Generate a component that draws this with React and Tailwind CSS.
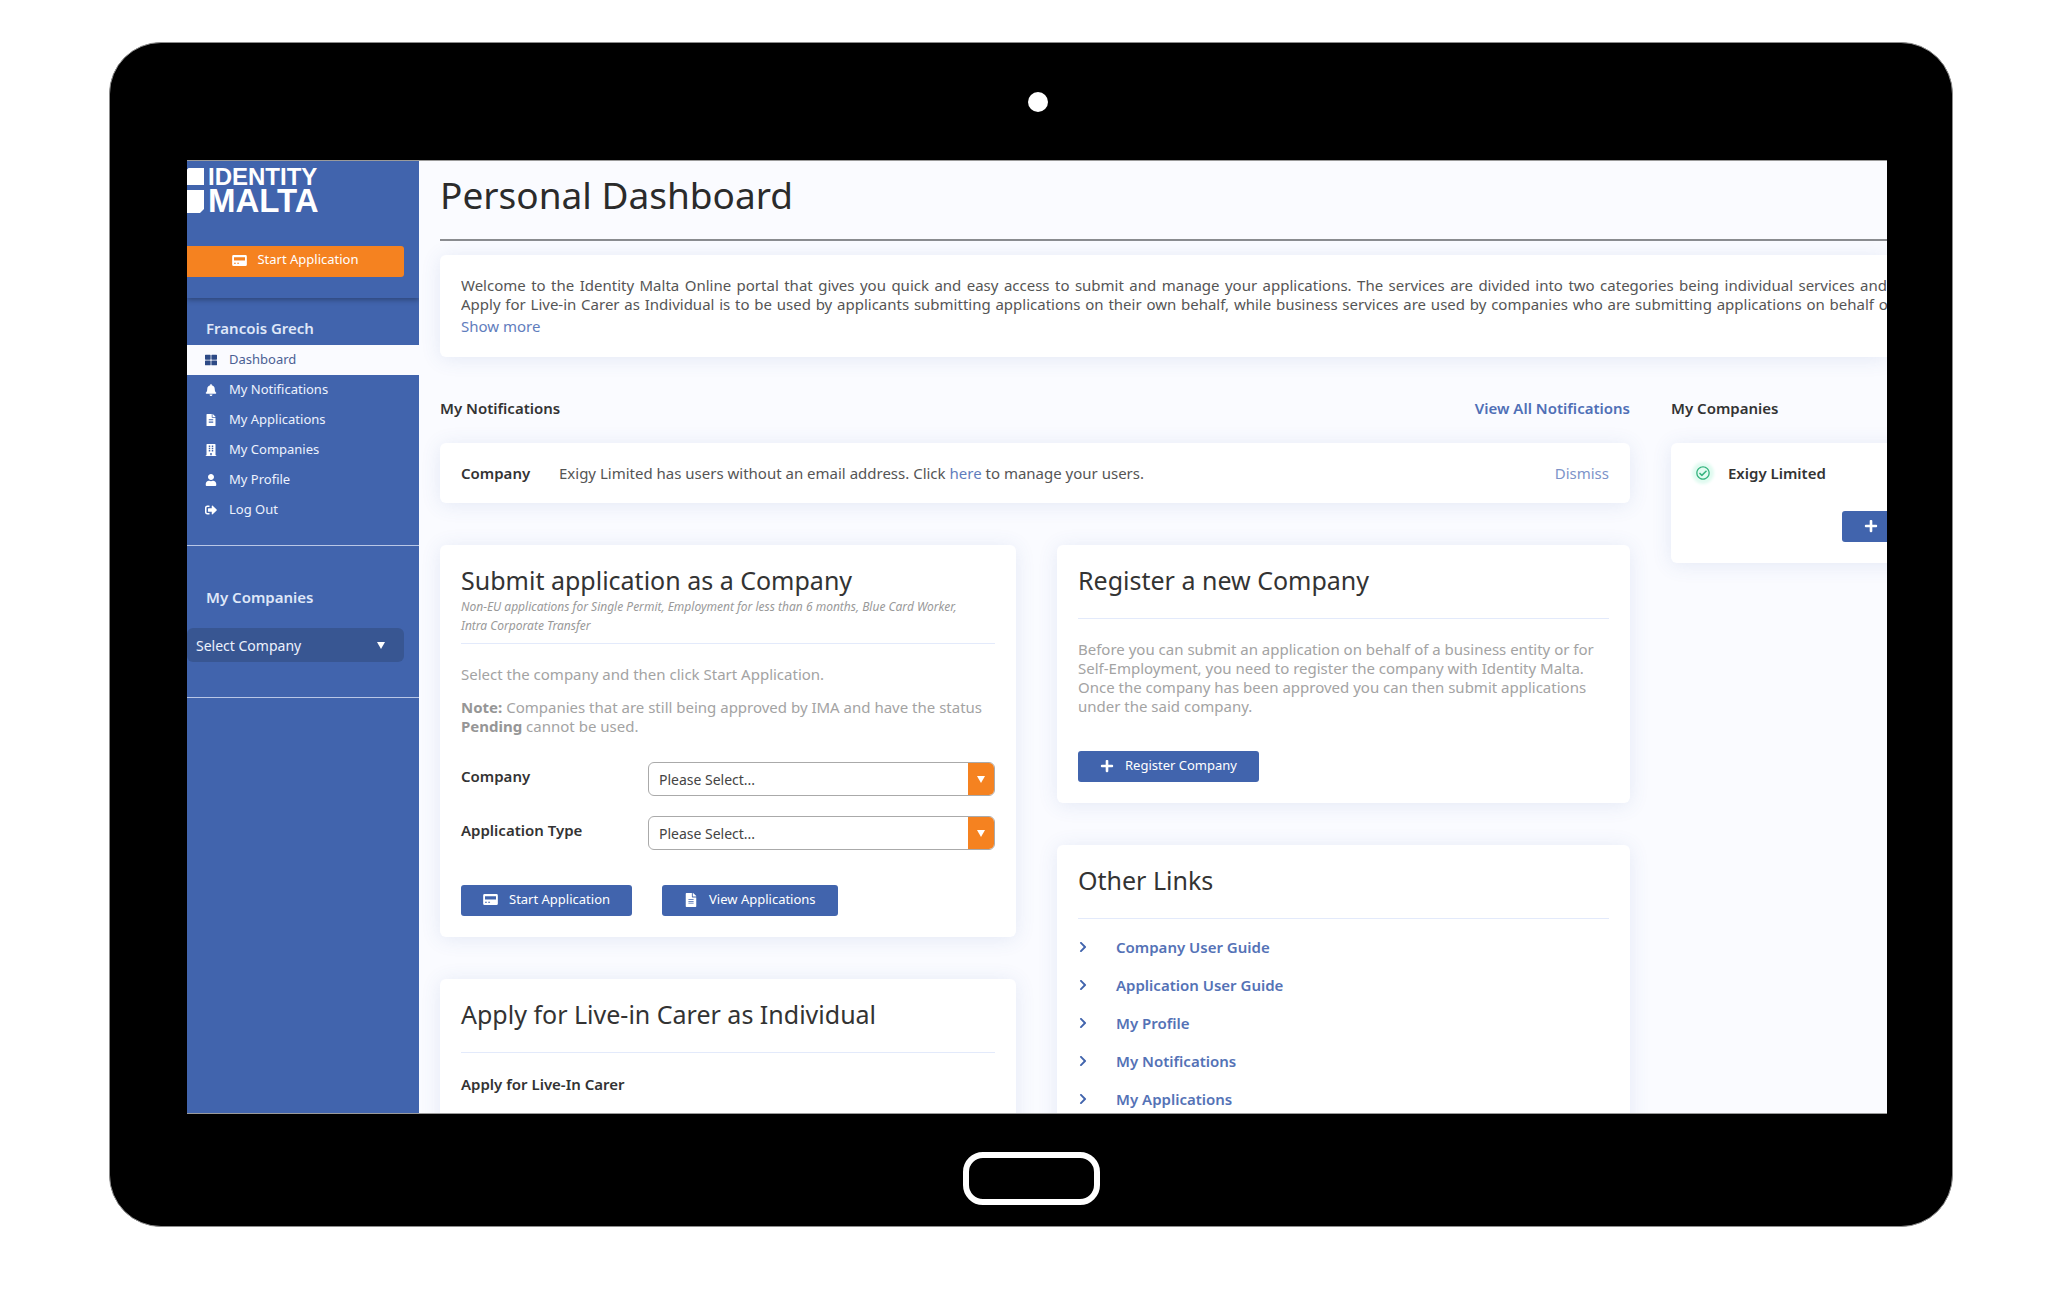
import {
  FaBell,
  FaBuilding,
  FaChevronRight,
  FaFileAlt,
  FaPlus,
  FaRegCheckCircle,
  FaSignOutAlt,
  FaThLarge,
  FaUser,
} from "react-icons/fa";

const menuItems = [
  { label: "Dashboard", icon: FaThLarge, active: true },
  { label: "My Notifications", icon: FaBell },
  { label: "My Applications", icon: FaFileAlt },
  { label: "My Companies", icon: FaBuilding },
  { label: "My Profile", icon: FaUser },
  { label: "Log Out", icon: FaSignOutAlt },
];

const otherLinks = [
  "Company User Guide",
  "Application User Guide",
  "My Profile",
  "My Notifications",
  "My Applications",
];

function CardIcon({ className }) {
  return (
    <svg viewBox="0 0 16 12" className={className} fill="currentColor" aria-hidden="true">
      <path
        fillRule="evenodd"
        d="M1.5 0h13A1.5 1.5 0 0 1 16 1.500v9a1.500 1.500 0 0 1-1.500 1.500h-13A1.500 1.500 0 0 1 0 10.500v-9A1.500 1.500 0 0 1 1.500 0zM2 2.500v3.500h12V2.500zM2 8.500v1h2v-1zM5.500 8.500v1h2v-1z"
      />
    </svg>
  );
}

function Triangle({ className }) {
  return (
    <svg viewBox="0 0 8 7" className={className} fill="currentColor" aria-hidden="true">
      <path d="M0 0h8L4 7z" />
    </svg>
  );
}

function Logo() {
  return (
    <a href="#home" className="flex gap-[4px] text-white">
      <svg viewBox="0 0 17 45" className="h-[45px] w-[17px] shrink-0" fill="currentColor" aria-hidden="true">
        <path d="M1.500 0H17v17H0V1.500zM0 22h17v19l-4 4H0z" />
      </svg>
      <span className="flex flex-col font-['Liberation_Sans',sans-serif] font-bold">
        <span className="text-[24px] leading-[17px]">IDENTITY</span>
        <span className="mt-[3px] text-[33px] leading-[25px]">MALTA</span>
      </span>
    </a>
  );
}

function Card({ className = "", children }) {
  return (
    <section className={`rounded-md bg-white px-[21px] shadow-[0_2px_20px_rgba(65,100,173,0.12)] ${className}`}>
      {children}
    </section>
  );
}

function CardTitle({ children }) {
  return (
    <h2 className="border-b border-[#e3eafb] pt-[19px] pb-[21px] text-[25px] leading-[33px] text-[#333]">
      {children}
    </h2>
  );
}

function Button({ icon: Icon, iconClass, children }) {
  return (
    <button
      type="button"
      className="flex h-[31px] items-center gap-[11px] rounded-[3px] bg-[#4164ad] px-[22px] pb-[2px] text-[13px] whitespace-nowrap text-white"
    >
      <Icon className={iconClass} />
      {children}
    </button>
  );
}

function SelectField({ id, label }) {
  return (
    <div className="flex items-center justify-between">
      <label htmlFor={id} className="pb-1.5 font-semibold text-[#333]">
        {label}
      </label>
      <div className="relative w-[65%]">
        <select
          id={id}
          className="h-[34px] w-full appearance-none rounded-md border border-[#aaa] bg-white pl-[10px] text-[14px] text-[#444]"
        >
          <option>Please Select...</option>
        </select>
        <span className="pointer-events-none absolute inset-y-px right-px flex w-[26px] items-center justify-center rounded-r-[5px] bg-[#f58220] text-white">
          <Triangle className="h-[7px] w-[8px]" />
        </span>
      </div>
    </div>
  );
}

function Sidebar() {
  return (
    <aside className="w-[232px] shrink-0 bg-[#4164ad] text-white">
      <div className="h-[137px] pt-[7px] shadow-[0_2px_5px_rgba(0,0,0,0.3)]">
        <Logo />
        <button
          type="button"
          className="mt-[33px] flex h-[31px] w-[217px] items-center justify-center gap-[10px] rounded-r-[3px] bg-[#f58220] pb-[3px] text-[13px]"
        >
          <CardIcon className="h-[11px] w-[15px]" />
          Start Application
        </button>
      </div>

      <h2 className="flex h-[47px] items-center pt-[13px] pl-[19px] font-semibold text-[#dfe7f8]">
        Francois Grech
      </h2>
      <nav>
        {menuItems.map(({ label, icon: Icon, active }) => (
          <a
            key={label}
            href="#menu"
            className={`flex h-[30px] items-center gap-3 pl-[18px] text-[13px] ${
              active ? "bg-[#fafbff] text-[#4b6093]" : "text-[#edf2fd]"
            }`}
          >
            <Icon className={`w-[12px] text-[12px] ${active ? "text-[#2d4a86]" : "text-white"}`} />
            {label}
          </a>
        ))}
      </nav>

      <div className="mt-5 h-[153px] border-y border-[#b9c7e6] pt-[40px]">
        <label htmlFor="side-company" className="block pl-[19px] leading-[22px] font-semibold text-[#dfe7f8]">
          My Companies
        </label>
        <div className="relative mt-5 w-[217px]">
          <select
            id="side-company"
            className="h-[34px] w-full appearance-none rounded-md bg-[#385692] pl-[9px] text-[14px] text-[#edf2fd]"
          >
            <option>Select Company</option>
          </select>
          <Triangle className="pointer-events-none absolute top-[14px] right-[19px] h-[7px] w-[8px]" />
        </div>
      </div>
    </aside>
  );
}

function Dashboard() {
  return (
    <main className="min-w-0 flex-1 overflow-hidden bg-[#fafbff] pl-[21px] text-[#555]">
      <h1 className="h-[80px] border-b-2 border-[#8a8c90] pt-[9px] text-[37px] leading-[49px] text-[#2b2b2b]">
        Personal Dashboard
      </h1>

      <Card className="mt-[14px] h-[102px] rounded-r-none pt-[21px] pr-0">
        <div className="overflow-hidden leading-[19px] whitespace-nowrap">
          <p className="text-justify [text-align-last:justify]">
            Welcome to the Identity Malta Online portal that gives you quick and easy access to submit and manage
            your applications. The services are divided into two categories being individual services and
          </p>
          <p className="w-[calc(100%+6px)] text-justify [text-align-last:justify]">
            Apply for Live-in Carer as Individual is to be used by applicants submitting applications on their own
            behalf, while business services are used by companies who are submitting applications on behalf of
          </p>
        </div>
        <a href="#more" className="mt-[3px] block leading-[19px] text-[#5f7dbd]">
          Show more
        </a>
      </Card>

      <div className="grid grid-cols-[minmax(0,1fr)_216px] gap-x-[41px]">
        <div>
          <div className="flex items-center justify-between pt-[40px] leading-[22px] font-semibold">
            <h3 className="text-[#333]">My Notifications</h3>
            <a href="#notifications" className="text-[#4f6fb6]">
              View All Notifications
            </a>
          </div>

          <Card className="mt-[24px] flex h-[60px] items-center">
            <span className="w-[98px] font-semibold text-[#333]">Company</span>
            <p className="flex-1">
              Exigy Limited has users without an email address. Click{" "}
              <a href="#users" className="text-[#5f7dbd]">
                here
              </a>{" "}
              to manage your users.
            </p>
            <button type="button" className="text-[#7c93c9]">
              Dismiss
            </button>
          </Card>

          <div className="mt-[42px] grid grid-cols-[576fr_573fr] items-start gap-x-[41px]">
            <div>
              <Card className="pb-[21px]">
                <h2 className="pt-[19px] text-[25px] leading-[33px] text-[#333]">Submit application as a Company</h2>
                <p className="border-b border-[#e3eafb] pb-[8px] text-[12px] leading-[19px] text-[#999] italic">
                  Non-EU applications for Single Permit, Employment for less than 6 months, Blue Card Worker,
                  <br />
                  Intra Corporate Transfer
                </p>
                <p className="mt-[21px] leading-[19px] text-[#a3a3a3]">
                  Select the company and then click Start Application.
                </p>
                <p className="mt-[14px] mb-[26px] leading-[19px] text-[#a3a3a3]">
                  <b className="text-[#969696]">Note:</b> Companies that are still being approved by IMA and have the
                  status <b className="text-[#969696]">Pending</b> cannot be used.
                </p>
                <div className="flex flex-col gap-5">
                  <SelectField id="company" label="Company" />
                  <SelectField id="application-type" label="Application Type" />
                </div>
                <div className="mt-[35px] flex gap-[30px]">
                  <Button icon={CardIcon} iconClass="h-[11px] w-[15px]">
                    Start Application
                  </Button>
                  <Button icon={FaFileAlt} iconClass="text-[14px]">
                    View Applications
                  </Button>
                </div>
              </Card>

              <Card className="mt-[42px] pb-10">
                <CardTitle>Apply for Live-in Carer as Individual</CardTitle>
                <h3 className="mt-5 leading-[22px] font-semibold text-[#333]">Apply for Live-In Carer</h3>
              </Card>
            </div>

            <div>
              <Card className="pb-[21px]">
                <CardTitle>Register a new Company</CardTitle>
                <p className="mt-[21px] mb-[35px] leading-[19px] text-[#a3a3a3]">
                  Before you can submit an application on behalf of a business entity or for Self-Employment, you need
                  to register the company with Identity Malta. Once the company has been approved you can then submit
                  applications under the said company.
                </p>
                <Button icon={FaPlus} iconClass="text-[14px]">
                  Register Company
                </Button>
              </Card>

              <Card className="mt-[42px] pb-5">
                <CardTitle>Other Links</CardTitle>
                <ul className="mt-[9px]">
                  {otherLinks.map((link) => (
                    <li key={link}>
                      <a href="#link" className="flex h-[38px] items-center gap-7 font-semibold text-[#5472b6]">
                        <FaChevronRight className="w-[10px] text-[12px] text-[#4164ad]" />
                        {link}
                      </a>
                    </li>
                  ))}
                </ul>
              </Card>
            </div>
          </div>
        </div>

        <div>
          <h3 className="pt-[40px] leading-[22px] font-semibold text-[#333]">My Companies</h3>
          <Card className="mt-[24px] w-[373px] pt-[19px] pb-[21px]">
            <div className="flex items-center gap-[16px] pl-[2px]">
              <span className="flex size-[18px] items-center justify-center rounded-full bg-[#e2fbf1] shadow-[0_0_3px_2px_#e2fbf1]">
                <FaRegCheckCircle className="text-[14px] text-[#35b37e]" />
              </span>
              <span className="leading-[22px] font-semibold text-[#333]">Exigy Limited</span>
            </div>
            <div className="mt-[27px] flex justify-end">
              <Button icon={FaPlus} iconClass="text-[14px]">
                Register Company
              </Button>
            </div>
          </Card>
        </div>
      </div>
    </main>
  );
}

export default function App() {
  return (
    <div className="flex h-screen flex-col bg-white pt-[42px] pr-[95px] pb-[67px] pl-[109px] font-['Noto_Sans','Open_Sans',sans-serif] text-[15px]">
      <div className="flex min-h-0 flex-1 flex-col rounded-[52px] border border-[#8c8c8c] bg-black">
        <div className="flex h-[117px] shrink-0 justify-center pt-[49px] pl-[13px]">
          <span className="size-[20px] rounded-full bg-white" />
        </div>
        <div className="mr-[65px] ml-[77px] flex min-h-0 flex-1 overflow-hidden border-y border-[#9a9a9a]">
          <Sidebar />
          <Dashboard />
        </div>
        <div className="flex h-[112px] shrink-0 items-center justify-center pt-[16px]">
          <button type="button" aria-label="Home" className="h-[53px] w-[137px] rounded-[20px] border-[6px] border-white" />
        </div>
      </div>
    </div>
  );
}
